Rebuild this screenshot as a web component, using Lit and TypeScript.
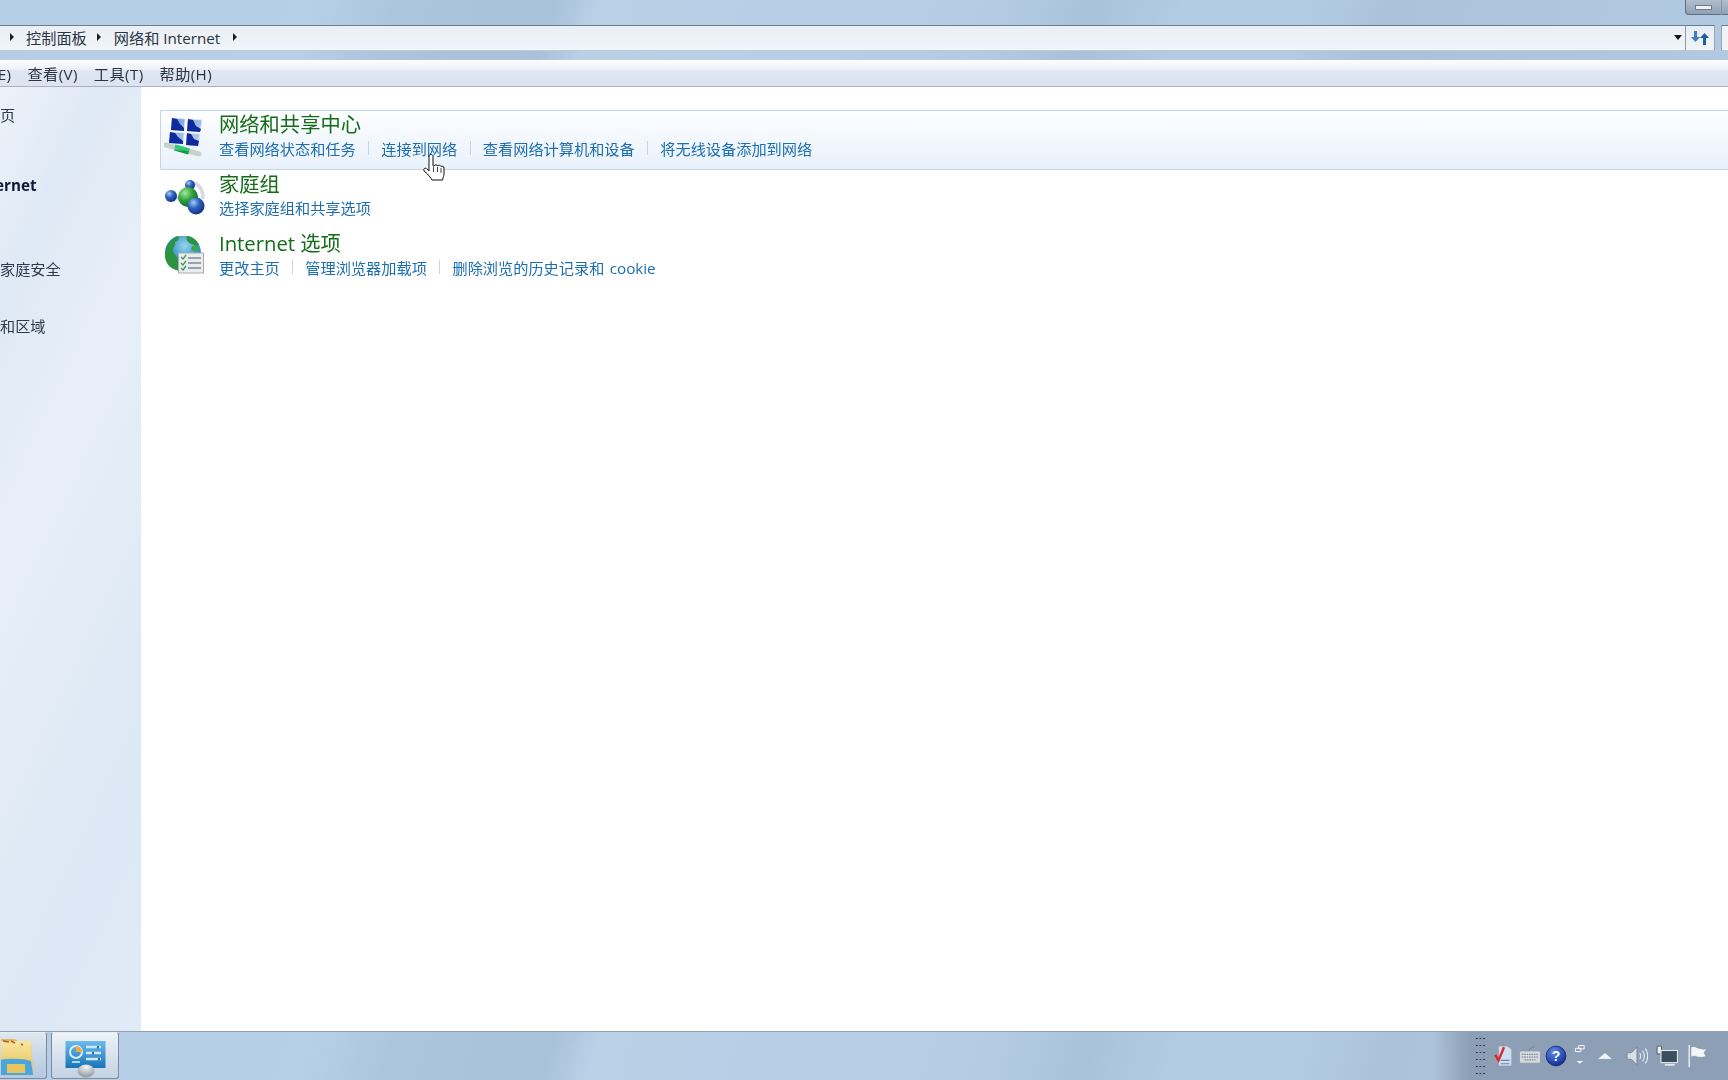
import { LitElement, html, css, svg } from "lit";
import { customElement } from "lit/decorators.js";

const sidebarGroups = [
  ["控制面板主页"],
  ["系统和安全", "网络和 Internet", "硬件和声音", "程序", "用户帐户和家庭安全", "外观和个性", "时钟、语言和区域", "轻松访问"],
];

const tasks = [
  {
    title: "网络和共享中心",
    icon: "network",
    hover: true,
    links: ["查看网络状态和任务", "连接到网络", "查看网络计算机和设备", "将无线设备添加到网络"],
  },
  { title: "家庭组", icon: "homegroup", links: ["选择家庭组和共享选项"] },
  {
    title: "Internet 选项",
    icon: "globe",
    links: ["更改主页", "管理浏览器加载项", "删除浏览的历史记录和 cookie"],
  },
];

const icons: Record<string, unknown> = {
  network: svg`
    <defs>
      <linearGradient id="pipe" x1="0" y1="0" x2="0" y2="1">
        <stop offset="0" stop-color="#6fe09a" /><stop offset="1" stop-color="#0e9a4c" />
      </linearGradient>
      <linearGradient id="sky" x1="0" y1="0" x2="1" y2="1">
        <stop offset="0" stop-color="#6f9be0" /><stop offset="1" stop-color="#c4d8f2" />
      </linearGradient>
    </defs>
    <path d="M8 1l13 1-1 12-13-1zM24 2l14 1-2 12-13-1zM6 15l14 1-1 11-14-1zM23 16l13 1-2 12-12-1z" fill="url(#sky)" stroke="#dfe8f3" stroke-width=".6" />
    <path d="M8 1l5 1 3 5 4 4v3L7 13zM24 2l5 1 3 6 5 3-1 3-13-1zM6 15l5 1 3 4 5 4v3L5 26zM23 16l4 1 3 5 5 2-1 5-12-1z" fill="#0f2a9c" />
    <path d="M2 28l33 9" stroke="#c6d2cb" stroke-width="5" stroke-linecap="round" />
    <path d="M11 30.500l14 4" stroke="url(#pipe)" stroke-width="6.500" />
    <path d="M11 29l14 4" stroke="#2ecb78" stroke-width="3" />
  `,
  homegroup: svg`
    <defs>
      <radialGradient id="ballb" cx=".35" cy=".3" r=".75">
        <stop offset="0" stop-color="#a9c9f2" /><stop offset=".45" stop-color="#2f64c2" /><stop offset="1" stop-color="#0d2f80" />
      </radialGradient>
      <radialGradient id="ballg" cx=".35" cy=".3" r=".75">
        <stop offset="0" stop-color="#a5e89c" /><stop offset=".5" stop-color="#2fa33c" /><stop offset="1" stop-color="#0d5f28" />
      </radialGradient>
    </defs>
    <path d="M30 6c6 2 9 8 9 16" fill="none" stroke="#d4dbe6" stroke-width="3.500" />
    <circle cx="26" cy="8" r="5" fill="url(#ballb)" />
    <path d="M8 20l10 2" stroke="#c8d4e4" stroke-width="3" />
    <circle cx="7" cy="19" r="6" fill="url(#ballb)" />
    <circle cx="24" cy="20" r="10" fill="url(#ballg)" />
    <circle cx="32" cy="29" r="8.500" fill="url(#ballb)" />
  `,
  globe: svg`
    <defs>
      <radialGradient id="sea" cx=".55" cy=".3" r=".8">
        <stop offset="0" stop-color="#9ad4ee" /><stop offset=".55" stop-color="#2c8fc8" /><stop offset="1" stop-color="#123f8c" />
      </radialGradient>
    </defs>
    <circle cx="19" cy="17" r="18" fill="url(#sea)" />
    <path d="M1 19C2 8 8 2 14 0c2 3 0 5-3 6 1 4-3 5-2 9 2 5 5 7 8 11 1 3 1 6 0 9C8 34 1 29 1 19zM23 0c6 1 10 4 12 9-4 2-5-1-8-1-3-2-6-5-4-8z" fill="#2c9440" />
    <path d="M28 10c4-1 6 0 7 3l-3 3-5-2z" fill="#3ca548" />
    <rect x="14.500" y="17" width="25" height="20" fill="#e9edef" stroke="#a5aeb0" />
    <path d="M17 21l2 2 3-4M17 27l2 2 3-4M17 32l2 2 3-4" fill="none" stroke="#3d9a50" stroke-width="1.300" />
    <path d="M24 22h13M24 27h13M24 32h13" stroke="#7c8a90" stroke-width="1.300" />
  `,
  folder: svg`
    <defs>
      <linearGradient id="fold" x1="0" y1="0" x2="0" y2="1">
        <stop offset="0" stop-color="#f7e6a0" /><stop offset="1" stop-color="#e8c25a" />
      </linearGradient>
    </defs>
    <path d="M-6 4h20l4 3h12l2 33H-6z" fill="#e2bd56" />
    <path d="M-6 6h36l2 30H-6z" fill="url(#fold)" />
    <path d="M2 6l6 1M10 6l4 2M20 9l2 1" stroke="#b0583c" stroke-width="1.500" />
    <path d="M-6 26c10-3 28-3 36 0l2 14H-6z" fill="#4ba6dc" />
    <path d="M6 29h18v9H6z" fill="#e8c65e" />
  `,
  panel: svg`
    <defs>
      <linearGradient id="screen" x1="0" y1="0" x2="0" y2="1">
        <stop offset="0" stop-color="#6cbcec" /><stop offset="1" stop-color="#1a74b8" />
      </linearGradient>
      <radialGradient id="dome" cx=".5" cy=".2" r=".8">
        <stop offset="0" stop-color="#f4f4f4" /><stop offset="1" stop-color="#8d949a" />
      </radialGradient>
    </defs>
    <rect x="0.500" y="1" width="40" height="27" fill="url(#screen)" />
    <circle cx="11" cy="12" r="6" fill="none" stroke="#d9eef9" stroke-width="2" />
    <path d="M11 6a6 6 0 0 1 6 6h-6z" fill="#f2a93b" />
    <rect x="7" y="21" width="8" height="2" fill="#a8dcf5" />
    <path d="M21 7h15M21 13h15M21 19h15" stroke="#cfe7f5" stroke-width="2.500" />
    <path d="M32 6h2v2.500h-2zM27 12h2v2.500h-2zM33 18h2v2.500h-2z" fill="#2a6aa0" />
    <ellipse cx="21" cy="31" rx="8.500" ry="6.500" fill="url(#dome)" />
  `,
  check: svg`
    <path d="M5 1h8l4 3v15H5z" fill="#cfdef0" stroke="#8fa0b4" stroke-width=".6" />
    <path d="M2 9l3 5 5-12" fill="none" stroke="#d8282a" stroke-width="2.200" />
    <path d="M7 14h8M7 17h8" stroke="#6a87a6" />
  `,
  keyboard: svg`
    <path d="M9 5c0-2 4-3 5-4" fill="none" stroke="#7d8c9b" />
    <rect x="0.500" y="5.500" width="19" height="11" rx="1" fill="#d7dbdf" stroke="#8c98a4" stroke-width=".7" />
    <path d="M2.500 8.500h15M2.500 11h15M5 13.500h10" stroke="#7f8b97" stroke-dasharray="1.500 .7" />
  `,
  help: svg`
    <defs>
      <radialGradient id="hb" cx=".4" cy=".3" r=".8">
        <stop offset="0" stop-color="#5d8fe8" /><stop offset="1" stop-color="#0a1f8f" />
      </radialGradient>
    </defs>
    <circle cx="10" cy="10" r="9" fill="url(#hb)" stroke="#12206a" stroke-width=".7" />
    <text x="10" y="14.500" text-anchor="middle" font-size="13" font-weight="700" font-family="Liberation Sans" fill="#fff">?</text>
  `,
  ime: svg`
    <path d="M7 0.500h5v3H7zM4 3h5v3H4z" fill="none" stroke="#f4f7fa" stroke-width=".9" />
    <path d="M5 14.500h6l-3 2.500z" fill="#f2f5f8" />
  `,
  up: svg`<path d="M3 13l7-6 7 6z" fill="#eef3f8" stroke="#788a9c" stroke-width=".4" />`,
  speaker: svg`
    <path d="M1 7h4l5-5v16l-5-5H1z" fill="#d9dee2" stroke="#6e7c8a" stroke-width=".7" />
    <path d="M12.500 7c1 2 1 4 0 6M15 5c2 3 2 7 0 10M17.500 3c3 4 3 10 0 14" fill="none" stroke="#e6ebef" stroke-width="1" />
  `,
  netstat: svg`
    <path d="M1 1h4v7H1z" fill="#eef0ee" stroke="#465660" stroke-width=".8" />
    <rect x="4.500" y="5" width="15" height="11" fill="#3a4f60" stroke="#e4e9ed" stroke-width="1" />
    <path d="M8 18h9" stroke="#e4e9ed" stroke-width="1.600" />
  `,
  flag: svg`
    <path d="M2 0v20" stroke="#e8edf1" stroke-width="1.300" />
    <path d="M3.500 2c4-2 5 1 8 1 3 1 5 1 7 0l-3 4 2 3c-3 2-6 1-8 1-2-1-4-1-6 0z" fill="#f3f5f7" stroke="#72808c" stroke-width=".5" />
  `,
};

@customElement("app-root")
export class AppRoot extends LitElement {
  static styles = css`
    :host {
      display: block;
      width: 1728px;
      height: 1080px;
      overflow: hidden;
      font-family: "Open Sans", "Noto Sans CJK SC", sans-serif;
      font-size: 15.2px;
      color: #1e2a3c;
    }
    .page {
      display: flex;
      flex-direction: column;
      height: 1080px;
      filter: blur(0.3px);
    }
    .glass {
      background: linear-gradient(
        108deg,
        #b5cee6 0,
        #b7cfe7 300px,
        #adc4dd 380px,
        #aac1db 530px,
        #bad0e7 570px,
        #b7cee6 800px,
        #b4cbe3 950px,
        #a9c1da 1040px,
        #b3cbe3 1130px,
        #b3cbe3 1240px,
        #abc2da 1320px,
        #adc4dc 1430px,
        #b2cae2 1728px
      );
    }
    .chrome {
      flex: none;
    }
    .caption {
      display: flex;
      justify-content: flex-end;
      height: 25px;
    }
    .min-btn {
      display: flex;
      justify-content: center;
      box-sizing: border-box;
      width: 37px;
      height: 15px;
      padding-top: 5px;
      border: 1px solid #5f6e7e;
      border-top: 0;
      border-right-color: #8595a6;
      border-bottom-left-radius: 4px;
      background: linear-gradient(#b0bfce, #8fa1b4);
    }
    .min-btn i {
      display: block;
      width: 17px;
      height: 5px;
      background: #eef2f6;
      border: 1px solid #6d7a88;
      box-sizing: border-box;
    }
    .close-stub {
      width: 6px;
      height: 15px;
      box-sizing: border-box;
      border-bottom: 1px solid #5f6e7e;
      background: linear-gradient(#b0bfce, #8fa1b4);
    }
    .address-row {
      display: flex;
      height: 35px;
      box-sizing: border-box;
      padding-bottom: 9px;
    }
    .address {
      flex: 1;
      display: flex;
      align-items: center;
      padding: 0 0 2px 10px;
      border-top: 1px solid #6f7d8c;
      border-bottom: 1px solid #bccad8;
      background: linear-gradient(#e9eff5, #f1f5f9);
      color: #2a3442;
    }
    .crumb-arrow {
      flex: none;
      width: 0;
      height: 0;
      border-left: 4px solid #1b2026;
      border-top: 4px solid transparent;
      border-bottom: 4px solid transparent;
    }
    .crumb {
      margin: 0 10px 0 12px;
    }
    .crumb + .crumb-arrow + .crumb {
      margin: 0 13px 0 13px;
    }
    .drop-arrow {
      width: 0;
      height: 0;
      margin-left: auto;
      margin-right: 3px;
      border-top: 5px solid #111;
      border-left: 4.5px solid transparent;
      border-right: 4.5px solid transparent;
    }
    .refresh {
      display: flex;
      align-items: center;
      justify-content: center;
      width: 30px;
      box-sizing: border-box;
      border-top: 1px solid #6f7d8c;
      border-left: 1px solid #8c9aa8;
      border-right: 1px solid #9aa8b6;
      border-bottom: 1px solid #bccad8;
      background: linear-gradient(#e6edf4, #f0f4f8);
    }
    .search-stub {
      width: 6px;
      margin-left: 6px;
      border-top: 1px solid #6f7d8c;
      border-left: 1px solid #9aa8b6;
      border-bottom: 1px solid #bccad8;
      background: #f2f5f8;
    }
    .menu-bar {
      flex: none;
      display: flex;
      align-items: center;
      gap: 16px;
      height: 27px;
      box-sizing: border-box;
      margin-left: -103.5px;
      padding-bottom: 2px;
      border-top: 1px solid #fff;
      border-bottom: 1px solid #a8b3c0;
      background: linear-gradient(#fbfcfe, #eff2f8 30%, #dfe5f2 42%, #dde3f1);
      color: #2a3442;
      letter-spacing: 0.4px;
      white-space: nowrap;
    }
    main {
      flex: 1;
      display: flex;
      min-height: 0;
      background: #fff;
    }
    .sidebar {
      flex: none;
      width: 141px;
      box-sizing: border-box;
      padding-top: 14px;
      overflow: hidden;
      background: linear-gradient(
        115deg,
        #ecf2f9 0,
        #dfe9f5 90px,
        #e7eef7 200px,
        #dce8f5 420px,
        #e8f0f9 700px,
        #deeaf7 1000px
      );
    }
    .side-group {
      display: flex;
      flex-direction: column;
      margin: 0 0 13px -76px;
      width: 300px;
    }
    .side-item {
      height: 28.3px;
      line-height: 28px;
      color: #2d3a4e;
      white-space: nowrap;
    }
    .side-item.current {
      font-weight: 700;
      color: #0c1a38;
    }
    .content {
      flex: 1;
      min-width: 0;
      padding: 23px 0 0 19px;
    }
    .task {
      display: flex;
      height: 59.6px;
      box-sizing: border-box;
      border: 1px solid transparent;
      border-right: 0;
      white-space: nowrap;
    }
    .task.hover {
      border-color: #c5d5e6;
      border-radius: 2px 0 0 2px;
      background: linear-gradient(#fdfeff, #e8f1fb);
    }
    .task-icon {
      flex: none;
      width: 58px;
      box-sizing: border-box;
      padding: 6px 0 0 3px;
    }
    .task-icon svg {
      display: block;
      width: 44px;
      height: 44px;
    }
    .task-title {
      height: 24.5px;
      line-height: 26px;
      font-size: 20.3px;
      color: #136c17;
    }
    .task-links {
      display: flex;
      align-items: center;
      height: 24px;
      color: #1c6eb0;
      word-spacing: 1.5px;
    }
    .task-sep {
      width: 1px;
      height: 14px;
      margin: 0 12.3px;
      background: #c9d4de;
    }
    .cursor {
      position: absolute;
      left: 423px;
      top: 154px;
      width: 24px;
      height: 30px;
    }
    .taskbar {
      flex: none;
      display: flex;
      align-items: stretch;
      height: 49px;
      box-sizing: border-box;
      border-top: 1px solid #929fae;
    }
    .task-btn {
      display: flex;
      box-sizing: border-box;
      height: 47px;
      border: 1px solid #7c8c9c;
      border-top-color: #e8eef5;
      border-radius: 3px;
      background: linear-gradient(#dfe8f1, #c4d3e4 60%, #b7c9dd);
    }
    .task-btn.explorer {
      width: 49px;
      margin-left: -2px;
      padding-left: 2px;
      align-items: center;
    }
    .task-btn.panel {
      width: 68px;
      margin-left: 3.5px;
      padding: 7px 0 0 13px;
      overflow: hidden;
      background: linear-gradient(#eef3f8, #d3dfeb 60%, #c3d2e2);
    }
    .task-btn svg {
      flex: none;
    }
    .tray {
      display: flex;
      align-items: center;
      gap: 4px;
      margin-left: auto;
      padding: 0 19px 0 42px;
      background: linear-gradient(90deg, transparent, #8c9fb5 36px);
    }
    .gripper {
      flex: none;
      width: 11px;
      height: 42px;
      margin-right: 3px;
      background-image: radial-gradient(circle, #2e3c48 0.9px, transparent 1.1px);
      background-size: 3.6px 7px;
    }
    .tray span {
      flex: none;
    }
    .tray svg {
      display: block;
    }
    .tray .up {
      margin-left: -3px;
    }
    .tray .speaker {
      margin-left: 6px;
    }
    .tray .netstat {
      margin-left: 4px;
    }
    .tray .flag {
      margin-left: 5px;
    }
  `;

  renderIcon(name: string, width: number, height: number, vb?: string) {
    return html`<svg width=${width} height=${height} viewBox=${vb ?? `0 0 ${width} ${height}`}>${icons[name]}</svg>`;
  }

  renderTask(task: (typeof tasks)[number]) {
    return html`
      <div class="task ${task.hover ? "hover" : ""}">
        <div class="task-icon">${this.renderIcon(task.icon, 44, 44)}</div>
        <div>
          <div class="task-title">${task.title}</div>
          <div class="task-links">
            ${task.links.map(
              (link, i) => html`${i ? html`<span class="task-sep"></span>` : ""}<span>${link}</span>`
            )}
          </div>
        </div>
      </div>
    `;
  }

  render() {
    const tray = ["check", "keyboard", "help", "ime", "up", "speaker", "netstat", "flag"];
    return html`
      <div class="page">
        <header class="chrome glass">
          <div class="caption">
            <div class="min-btn"><i></i></div>
            <div class="close-stub"></div>
          </div>
          <div class="address-row">
            <div class="address">
              <span class="crumb-arrow"></span>
              <span class="crumb">控制面板</span>
              <span class="crumb-arrow"></span>
              <span class="crumb">网络和 Internet</span>
              <span class="crumb-arrow"></span>
              <span class="drop-arrow"></span>
            </div>
            <div class="refresh">
              <svg width="20" height="16" viewBox="0 0 20 16">
                <path d="M4 1h3v6h3l-4.500 5L1 7h3z" fill="#3b7fc0" />
                <path d="M13 15h3V8h3l-4.500-5L10 8h3z" fill="#205f9e" />
              </svg>
            </div>
            <div class="search-stub"></div>
          </div>
        </header>

        <nav class="menu-bar">
          <span>文件(F)</span><span>编辑(E)</span><span>查看(V)</span><span>工具(T)</span><span>帮助(H)</span>
        </nav>

        <main>
          <aside class="sidebar">
            ${sidebarGroups.map(
              (group) => html`
                <div class="side-group">
                  ${group.map(
                    (item) =>
                      html`<div class="side-item ${item.startsWith("网络") ? "current" : ""}">${item}</div>`
                  )}
                </div>
              `
            )}
          </aside>
          <section class="content">${tasks.map((task) => this.renderTask(task))}</section>
        </main>

        <footer class="taskbar glass">
          <div class="task-btn explorer">${this.renderIcon("folder", 40, 42)}</div>
          <div class="task-btn panel">${this.renderIcon("panel", 42, 42)}</div>
          <div class="tray">
            <div class="gripper"></div>
            ${tray.map((name) => html`<span class=${name}>${this.renderIcon(name, 22, 22, "0 0 20 20")}</span>`)}
          </div>
        </footer>

        <svg class="cursor" viewBox="0 0 24 30">
          <path
            d="M6 2c0-2 4-2 4 0v10l1 0c1-1.500 3-1.500 3.500 0 1-1 3-1 3.500.5 1-.7 3-.3 3 1.500v6c0 2-1 3-1.500 6H9c-1-2-3-4-5-6.500L1 17c-1-2 1-3.500 2.500-2.500L6 17z"
            fill="#fff"
            stroke="#111"
            stroke-width="1"
          />
          <path d="M10.500 13v5M14.500 13v5M18 14v5" stroke="#444" />
        </svg>
      </div>
    `;
  }
}
